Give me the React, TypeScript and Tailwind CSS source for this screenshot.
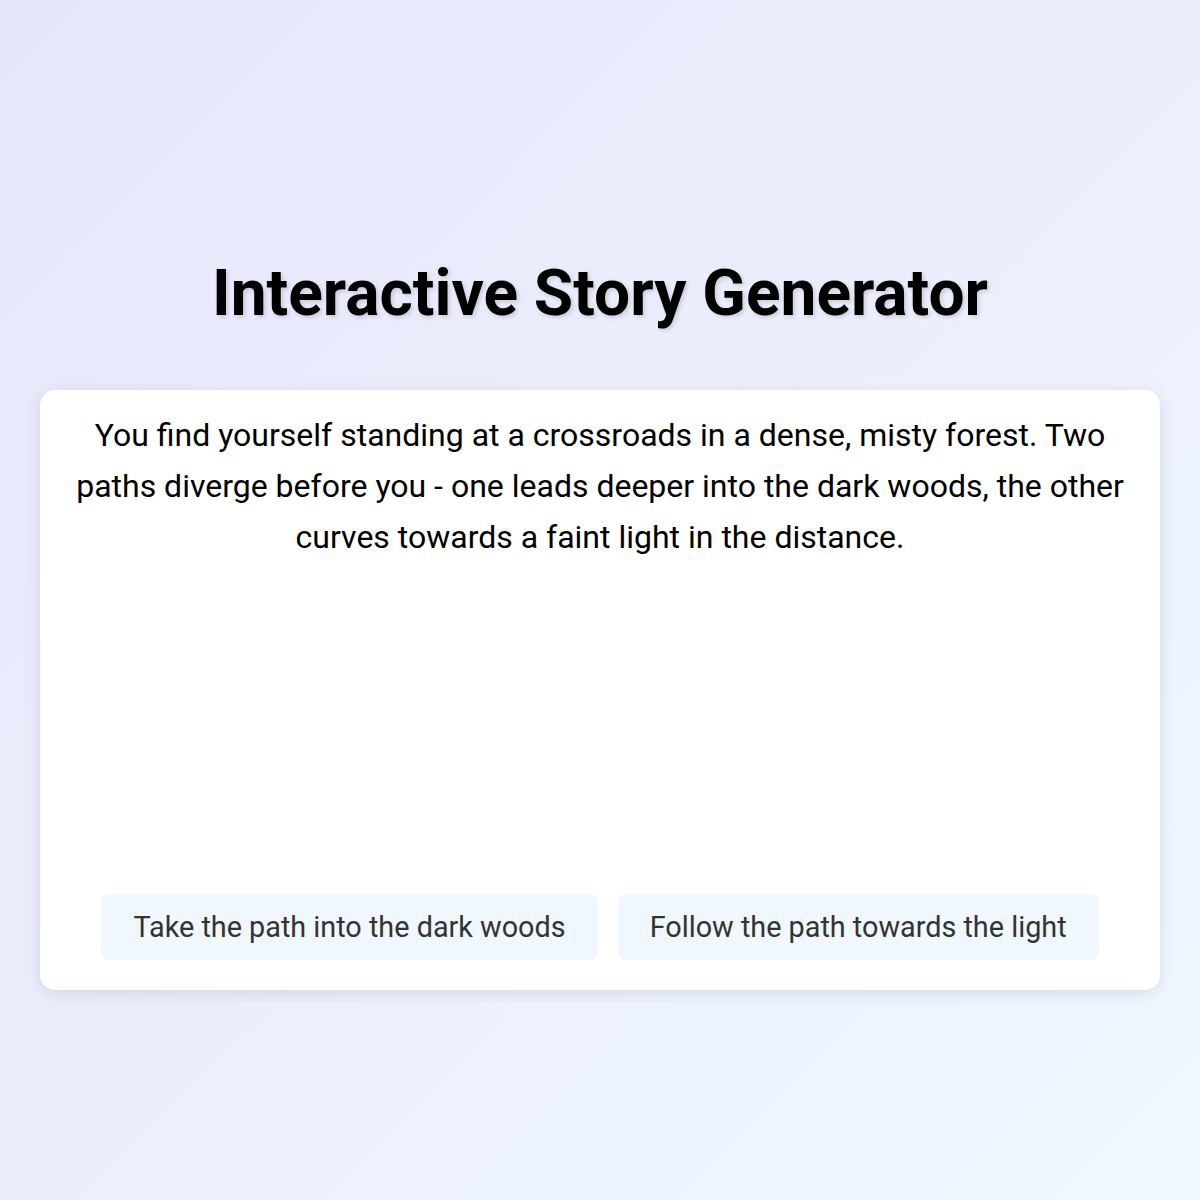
import React from "react";

export default function App() {
  return (
    <div
      className="min-h-[1200px] w-full bg-gradient-to-br from-[#e6e6fa] to-[#f0f8ff] px-10 pt-[256px] pb-10"
      style={{ fontFamily: "Roboto, 'Noto Sans', sans-serif" }}
    >
      <h1 className="mb-[57px] text-center text-[64px] font-bold leading-[1.2] text-black [text-shadow:2px_2px_4px_rgba(0,0,0,0.15)]">
        Interactive Story Generator
      </h1>
      <div className="flex min-h-[600px] flex-col justify-between rounded-[15px] bg-white px-8 pt-5 pb-[30px] shadow-[0_4px_16px_rgba(0,0,0,0.1)]">
        <p className="text-center text-[32px] leading-[1.6] text-black">
          You find yourself standing at a crossroads in a dense, misty forest. Two paths diverge before you - one leads deeper into the dark woods, the other curves towards a faint light in the distance.
        </p>
        <div className="flex justify-center gap-5">
          <button className="rounded-lg bg-[#f0f7ff] px-8 py-4 text-[28.8px] leading-[normal] text-[#333]">
            Take the path into the dark woods
          </button>
          <button className="rounded-lg bg-[#f0f7ff] px-8 py-4 text-[28.8px] leading-[normal] text-[#333]">
            Follow the path towards the light
          </button>
        </div>
      </div>
    </div>
  );
}
